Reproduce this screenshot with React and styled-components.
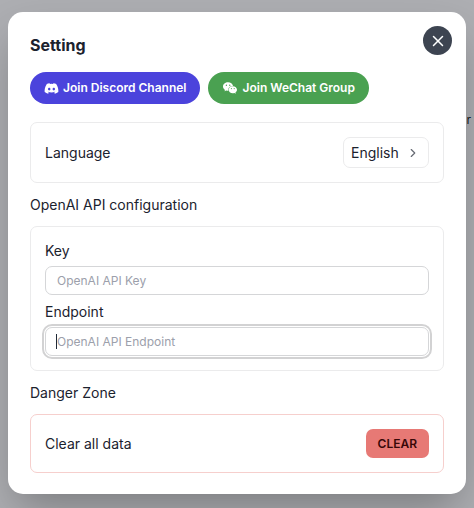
import React from "react";
import styled, { createGlobalStyle, css } from "styled-components";
import { FaDiscord } from "react-icons/fa";
import { AiFillWechat } from "react-icons/ai";
import { ChevronRight, X } from "lucide-react";

const GlobalStyle = createGlobalStyle`
  *, *::before, *::after { box-sizing: border-box; }
  body {
    margin: 0;
    background: #adaeb2;
    color: #1b222e;
    font-family: Inter, "Liberation Sans", sans-serif;
    font-size: 14px;
    line-height: 20px;
  }
  button, input, select { font: inherit; color: inherit; }
`;

const Backdrop = styled.div`
  position: relative;
  display: flex;
  align-items: center;
  justify-content: center;
  min-height: 100vh;
  padding: 12px 8px 14px;
  overflow: hidden;
`;

const PageText = styled.span`
  position: absolute;
  top: 110px;
  right: 3px;
  font-size: 12px;
  color: #16181d;
`;

const Dialog = styled.section`
  position: relative;
  width: 100%;
  max-width: 512px;
  padding: 21px 22px;
  border-radius: 15px;
  background: #fff;
  box-shadow: 0 20px 44px -8px rgba(0, 0, 0, 0.3);
`;

const CloseButton = styled.button`
  position: absolute;
  top: 14px;
  right: 14px;
  display: grid;
  place-items: center;
  width: 29px;
  height: 29px;
  padding: 0;
  border: 0;
  border-radius: 50%;
  background: #3d4451;
  color: #fff;
`;

const Title = styled.h1`
  margin: 0 0 15px;
  font-size: 16px;
  line-height: 24px;
  font-weight: 700;
`;

const Links = styled.nav`
  display: flex;
  flex-wrap: wrap;
  gap: 8px;
  margin-bottom: 18px;
`;

const PillLink = styled.a`
  display: inline-flex;
  align-items: center;
  gap: 4px;
  height: 32px;
  padding: 0 14px;
  border-radius: 16px;
  background: ${(p) => p.$color};
  color: #fff;
  font-size: 12px;
  font-weight: 600;
  text-decoration: none;
  white-space: nowrap;
`;

const Card = styled.div`
  padding: 14px;
  border: 1px solid ${(p) => (p.$danger ? "#f6cfcd" : "#ebebec")};
  border-radius: 7px;
`;

const Row = styled.div`
  display: flex;
  align-items: center;
  justify-content: space-between;
`;

const SectionTitle = styled.h2`
  margin: 12px 0 11px;
  font-size: 14px;
  line-height: 20px;
  font-weight: 400;
`;

const SelectBox = styled.div`
  display: grid;
  align-items: center;

  > * { grid-area: 1 / 1; }
  > svg { justify-self: end; margin-right: 9px; color: #666a73; pointer-events: none; }
`;

const Select = styled.select`
  appearance: none;
  height: 31px;
  padding: 0 29px 0 7px;
  border: 1px solid #ebebec;
  border-radius: 7px;
  background: #fff;
`;

const Field = styled.div`
  display: flex;
  flex-direction: column;
  gap: 5px;

  & + & { margin-top: 7px; }
`;

const InputBox = styled.div`
  position: relative;
  display: flex;
`;

const ring = css`
  outline: 2px solid #d2d2d3;
  outline-offset: 1px;
`;

const Input = styled.input`
  width: 100%;
  height: 29px;
  padding: 0 11px;
  border: 1px solid #d5d6d8;
  border-radius: 7px;
  background: #fff;
  font-size: 12px;
  ${(p) => p.$active && ring}

  &:focus { ${ring} }
  &::placeholder { color: #9ca0ab; opacity: 1; }
`;

const Caret = styled.i`
  position: absolute;
  top: 7px;
  left: 11px;
  width: 1px;
  height: 15px;
  background: #1f2937;
`;

const ClearButton = styled.button`
  height: 29px;
  padding: 0 12px;
  border: 0;
  border-radius: 7px;
  background: #e77975;
  color: #380808;
  font-size: 12px;
  font-weight: 600;
`;

export default function App() {
  return (
    <>
      <GlobalStyle />
      <Backdrop>
        <PageText>r</PageText>
        <Dialog role="dialog" aria-labelledby="setting-title">
          <CloseButton type="button" aria-label="Close">
            <X size={18} strokeWidth={2} />
          </CloseButton>
          <Title id="setting-title">Setting</Title>
          <Links>
            <PillLink href="#discord" $color="#4b43dc">
              <FaDiscord size={15} />
              Join Discord Channel
            </PillLink>
            <PillLink href="#wechat" $color="#4aa151">
              <AiFillWechat size={16} />
              Join WeChat Group
            </PillLink>
          </Links>
          <Card>
            <Row>
              <label htmlFor="language">Language</label>
              <SelectBox>
                <Select id="language" defaultValue="en">
                  <option value="en">English</option>
                </Select>
                <ChevronRight size={14} strokeWidth={2} />
              </SelectBox>
            </Row>
          </Card>
          <SectionTitle>OpenAI API configuration</SectionTitle>
          <Card>
            <Field>
              <label htmlFor="key">Key</label>
              <InputBox>
                <Input id="key" placeholder="OpenAI API Key" />
              </InputBox>
            </Field>
            <Field>
              <label htmlFor="endpoint">Endpoint</label>
              <InputBox>
                <Input id="endpoint" placeholder="OpenAI API Endpoint" $active />
                <Caret />
              </InputBox>
            </Field>
          </Card>
          <SectionTitle>Danger Zone</SectionTitle>
          <Card $danger>
            <Row>
              <span>Clear all data</span>
              <ClearButton type="button">CLEAR</ClearButton>
            </Row>
          </Card>
        </Dialog>
      </Backdrop>
    </>
  );
}
